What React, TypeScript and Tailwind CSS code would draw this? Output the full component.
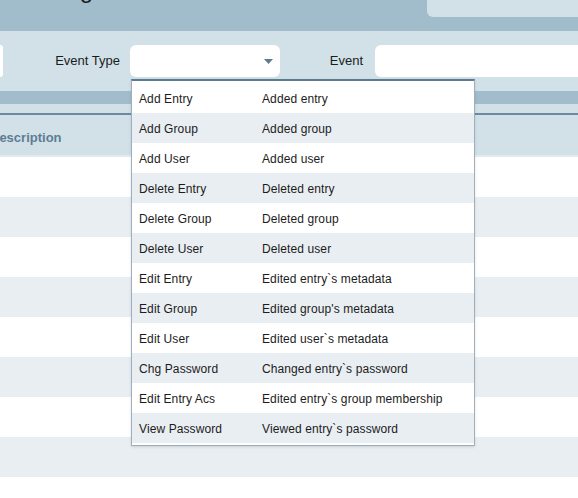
const EVENTS: [string, string][] = [
  ['Add Entry', 'Added entry'],
  ['Add Group', 'Added group'],
  ['Add User', 'Added user'],
  ['Delete Entry', 'Deleted entry'],
  ['Delete Group', 'Deleted group'],
  ['Delete User', 'Deleted user'],
  ['Edit Entry', 'Edited entry`s metadata'],
  ['Edit Group', "Edited group's metadata"],
  ['Edit User', 'Edited user`s metadata'],
  ['Chg Password', 'Changed entry`s password'],
  ['Edit Entry Acs', 'Edited entry`s group membership'],
  ['View Password', 'Viewed entry`s password'],
];

function EventTypeMenu() {
  return (
    <div className="absolute left-[131px] top-[79px] w-[344px] border-x border-b border-t-2 border-x-[#9fb0bd] border-b-[#9fb0bd] border-t-[#5b7b91] bg-white py-[2px] shadow-sm">
      {EVENTS.map(([type, desc], i) => (
        <div
          key={type}
          className={`flex h-[30px] items-center px-[7px] pt-[2px] text-[12px] tracking-[0.1px] text-[#1c1c1c] ${
            i % 2 === 1 ? 'bg-[#e9eef2]' : 'bg-white'
          }`}
        >
          <span className="w-[123px] shrink-0">{type}</span>
          <span>{desc}</span>
        </div>
      ))}
    </div>
  );
}

export default function App() {
  return (
    <div className="relative h-[498px] w-[578px] overflow-hidden bg-white font-['Liberation_Sans',Arial,sans-serif]">
      {/* Header */}
      <div className="flex h-[31px] items-start justify-between bg-[#a1bccb]">
        <h1 className="ml-[53px] -mt-[22px] text-[24px] leading-none text-[#1c1c1c]">
          Log
        </h1>
        <div className="h-[17px] w-[151px] rounded-bl-[6px] bg-[#d2e0e8]" />
      </div>

      {/* Filters */}
      <div className="flex h-[60px] items-center bg-[#d2e0e8]">
        <div className="h-[32px] w-[3px] shrink-0 rounded-r-[6px] bg-white" />
        <div className="w-[127px] shrink-0 pr-[10px] text-right text-[13px] text-[#1c1c1c]">
          Event Type
        </div>
        <div className="relative flex h-[32px] w-[150px] shrink-0 items-center justify-end rounded-[6px] bg-white pr-[7px]">
          <svg width="9" height="5" viewBox="0 0 9 5">
            <path d="M0 0h9L4.5 5z" fill="#5b7b91" />
          </svg>
        </div>
        <div className="w-[95px] shrink-0 pr-[12px] text-right text-[13px] text-[#1c1c1c]">
          Event
        </div>
        <div className="h-[32px] flex-1 rounded-l-[6px] bg-white" />
      </div>

      {/* Table */}
      <div className="h-[13px] bg-[#a1bccb]" />
      <div className="h-[9px] bg-[#d2e0e8]" />
      <div className="h-[2px] bg-[#6a8ba2]" />
      <div className="flex h-[42px] items-center border-b-2 border-[#e4ebf0] bg-[#d2e0e8] pt-[5px]">
        <span className="-ml-[10px] text-[13px] font-bold text-[#5c7d94]">Description</span>
      </div>
      {Array.from({ length: 9 }).map((_, i) => (
        <div key={i} className={`h-[40px] ${i % 2 === 1 ? 'bg-[#e9eef2]' : 'bg-white'}`} />
      ))}

      <EventTypeMenu />
    </div>
  );
}
